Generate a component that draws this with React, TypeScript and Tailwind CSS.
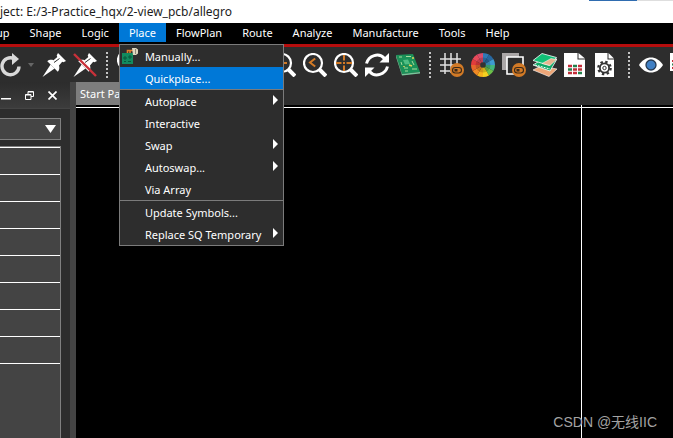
import { useState } from "react";
import type { ReactNode } from "react";

type MenuEntry = {
  label: string;
  submenu?: boolean;
  separated?: boolean;
  icon?: ReactNode;
};

type ToolProps = {
  label: string;
  children: ReactNode;
};

const MENUS = [
  "up",
  "Shape",
  "Logic",
  "Place",
  "FlowPlan",
  "Route",
  "Analyze",
  "Manufacture",
  "Tools",
  "Help",
];

const LIST_ROWS = [1, 2, 3, 4, 5, 6, 7, 8];

const WHEEL_COLORS = [
  "#2f79b5",
  "#2767a0",
  "#3f9bd0",
  "#43b77c",
  "#6cc04a",
  "#f5d21f",
  "#f7b21c",
  "#f08a24",
  "#e8662c",
  "#e23c3c",
  "#e84a5a",
  "#d94b6b",
];

const Tool = ({ label, children }: ToolProps) => (
  <button type="button" aria-label={label} className="h-6 w-6 shrink-0">
    <svg viewBox="0 0 24 24" className="block h-6 w-6" fill="none">
      {children}
    </svg>
  </button>
);

const Divider = () => (
  <span className="mx-0.5 h-[26px] w-0 shrink-0 border-l-2 border-dotted border-[#c4c4c4]" />
);

const Lens = ({ children }: { children?: ReactNode }) => (
  <>
    <circle cx="10" cy="10" r="9" stroke="#fff" strokeWidth="2.2" />
    <path d="M16 16l7 7" stroke="#fff" strokeWidth="4" />
    {children}
  </>
);

const Pin = () => (
  <g fill="#fff">
    <path d="M16 0l8 8-2.6 1.3-1.2-.5-3.2 3.7c.8 2.4.2 4.800-1.200 6.200L5.300 8.200c1.500-1.400 4-1.800 6.200-1l3.800-3.200-.6-1.500z" />
    <path d="M8.600 11.500l4 4L.5 24z" />
    <path d="M17.500 5.500l-5.500 4" stroke="#2d2d2d" />
  </g>
);

const Toggle = () => (
  <>
    <circle cx="17" cy="17" r="7" fill="#d27a26" />
    <rect x="12.5" y="14.5" width="9" height="5.500" rx="2.700" stroke="#3b2a1a" strokeWidth="1.100" />
    <path d="M14.500 16h3v2.500h-3z" fill="#3b2a1a" />
  </>
);

const wedge = (index: number, outer: number) => {
  const from = (index * Math.PI) / 6 - Math.PI / 2;
  const to = from + Math.PI / 6;
  const x = (angle: number) => 12 + outer * Math.cos(angle);
  const y = (angle: number) => 12 + outer * Math.sin(angle);
  return `M12 12L${x(from)} ${y(from)}A${outer} ${outer} 0 0 1 ${x(to)} ${y(to)}Z`;
};

const ComponentIcon = () => (
  <svg viewBox="0 0 16 16" className="h-4 w-4" fill="none">
    <path d="M0 5h11v11H0z" fill="#128a5e" />
    <path d="M2 9h2v2H2zM7 8h2v2H7z" stroke="#07563a" />
    <path d="M2 13.500h2M6 13.500h3" stroke="#07563a" />
    <path d="M5.500 5V2.500H11M8 2.500V5" stroke="#e07c2c" strokeWidth="1.600" />
    <path d="M10 0h4l2 1.500v4L14 7h-3z" fill="#ddd6be" />
    <path d="M13.500 1v5" stroke="#8d8877" />
  </svg>
);

const PLACE_MENU: MenuEntry[] = [
  { label: "Manually...", icon: <ComponentIcon /> },
  { label: "Quickplace..." },
  { label: "Autoplace", submenu: true, separated: true },
  { label: "Interactive" },
  { label: "Swap", submenu: true },
  { label: "Autoswap...", submenu: true },
  { label: "Via Array" },
  { label: "Update Symbols...", separated: true },
  { label: "Replace SQ Temporary", submenu: true },
];

const PlaceMenu = () => {
  const [active, setActive] = useState("Quickplace...");

  return (
    <div
      role="menu"
      className="absolute left-0 top-[21px] z-20 w-[165px] border border-[#7b7b7b] bg-[#2d2d2d]"
    >
      {PLACE_MENU.map((entry) => (
        <div key={entry.label} className={entry.separated ? "border-t border-[#7b7b7b]" : ""}>
          <button
            type="button"
            role="menuitem"
            onMouseEnter={() => setActive(entry.label)}
            className={`flex h-[22px] w-full items-center whitespace-nowrap pr-[5px] text-left ${
              active === entry.label ? "bg-[#0078d7]" : ""
            }`}
          >
            <span className="flex w-[25px] shrink-0 pl-0.5">{entry.icon}</span>
            <span className="flex-1 pt-0.5">{entry.label}</span>
            {entry.submenu ? (
              <svg viewBox="0 0 5 10" className="mb-0.5 h-2.5 w-[5px]">
                <path d="M0 0l5 5-5 5z" fill="#fff" />
              </svg>
            ) : null}
          </button>
        </div>
      ))}
    </div>
  );
};

const MenuBar = () => {
  const [open, setOpen] = useState("Place");

  return (
    <nav className="flex h-[21px] bg-black">
      <div className="-ml-3.5 flex">
        {MENUS.map((menu) => (
          <div key={menu} className="relative">
            <button
              type="button"
              aria-expanded={open === menu}
              onClick={() => setOpen(open === menu ? "" : menu)}
              className={`flex h-[19px] items-center px-2.5 pt-0.5 ${
                open === menu ? "bg-[#0078d7]" : ""
              }`}
            >
              {menu}
            </button>
            {menu === "Place" && open === menu ? <PlaceMenu /> : null}
          </div>
        ))}
      </div>
    </nav>
  );
};

const Toolbar = () => (
  <div className="flex h-[35px] items-center gap-[7px] overflow-hidden bg-[#2d2d2d]">
    <div className="flex w-[35px] shrink-0 items-center gap-1">
      <Tool label="Redo">
        <path d="M14 5.500A8.500 8.500 0 1 0 19 13.500" stroke="#d9d9d9" strokeWidth="3.400" />
        <path d="M12 0l7 6-7 6z" fill="#d9d9d9" />
      </Tool>
      <svg viewBox="0 0 6 4" className="h-1 w-1.5">
        <path d="M0 0h6L3 4z" fill="#666" />
      </svg>
    </div>
    <Tool label="Fix">
      <Pin />
    </Tool>
    <Tool label="Unfix">
      <Pin />
      <path d="M1 1l22 22" stroke="#c9313a" strokeWidth="2.400" />
    </Tool>
    <Divider />
    <div className="w-[148px] shrink-0">
      <Tool label="Zoom points">
        <Lens />
      </Tool>
    </div>
    <Tool label="Zoom out">
      <Lens>
        <path d="M5 10h10" stroke="#d27a26" strokeWidth="2" />
      </Lens>
    </Tool>
    <Tool label="Zoom previous">
      <Lens>
        <path d="M12.200 5.500L7 9.500l5.200 4" stroke="#d27a26" strokeWidth="2" />
      </Lens>
    </Tool>
    <Tool label="Zoom selection">
      <Lens>
        <path d="M2 10h5.500M12.500 10H18M10 2v5.500M10 12.500v5.500M9 10h2" stroke="#d27a26" strokeWidth="2" />
      </Lens>
    </Tool>
    <Tool label="Redraw">
      <path d="M1.500 10.500C3.500 2.500 14 -1 19.500 5.500" stroke="#fff" strokeWidth="3" />
      <path d="M24 0v9.500h-9.500z" fill="#fff" />
      <path d="M22.500 13.500C20.500 21.500 10 25 4.500 18.500" stroke="#fff" strokeWidth="3" />
      <path d="M0 24v-9.500h9.500z" fill="#fff" />
    </Tool>
    <Tool label="3D view">
      <path d="M0 2l17-1 7 18-18 2z" fill="#1b9158" />
      <path d="M0 2l6 19v1.500L0 4zM6 21l18-2v1.500L6 22.500z" fill="#79c79b" />
      <path d="M7 7l5-.5 2 4.500-5 .5z" fill="#4fbd83" />
      <path d="M3 4h3M10 3.500h5M5 9l1 3M16 8l2 4M8 15h4M16 16h5M9 18h3" stroke="#a8dc9d" />
      <path d="M13 12l3 1M17 4v2M8 13v1" stroke="#e8d35a" strokeWidth="1.500" />
    </Tool>
    <Divider />
    <Tool label="Grid toggle">
      <path d="M5 0v21M11 0v20M17 0v12M0 6h21M0 12h14M0 18h11" stroke="#e2e2e2" strokeWidth="1.500" />
      <Toggle />
    </Tool>
    <Tool label="Color">
      {WHEEL_COLORS.map((color, index) => (
        <path key={color} d={wedge(index, 12)} fill={color} />
      ))}
      <circle cx="12" cy="12" r="7.500" fill="#000" opacity=".16" />
      <circle cx="12" cy="12" r="2.800" fill="#333" />
    </Tool>
    <Tool label="Shadow toggle">
      <path d="M0 0h17v17H0z" fill="#aaa6a6" />
      <path d="M5 4h16v17H5z" fill="#2d2d2d" stroke="#fff" strokeWidth="1.600" />
      <Toggle />
    </Tool>
    <Tool label="Cross section">
      <path d="M0 17l8-4 16 3-8 7.500z" fill="#eda678" stroke="#fff" strokeWidth=".6" />
      <path d="M0 12l8-5 16-1-7 12z" fill="#10a866" stroke="#fff" strokeWidth=".8" />
      <path d="M2 12l15 4" stroke="#fff" strokeDasharray="2 1" />
      <path d="M0 7.500L9 .5l14.500 4-7 8z" fill="#12c077" stroke="#fff" strokeWidth=".8" />
      <path d="M9 10.500l9-5 5.500 1-6.500 6z" fill="#e7b48d" stroke="#fff" strokeWidth=".5" />
    </Tool>
    <Tool label="Constraint manager">
      <path d="M0 0h13.500v6.500H21V24H0z" fill="#fff" />
      <path d="M14.500 0L21 5.500h-6.500z" fill="#fff" />
      <path d="M4 13h4M14 13h4M9 20h4" stroke="#c52e3a" strokeWidth="2.400" />
      <path d="M9 13h4M4 16.500h4M14 20h4" stroke="#23804c" strokeWidth="2.400" />
      <path d="M9 16.500h4M14 16.500h4M4 20h4" stroke="#b9333a" strokeWidth="2.400" />
    </Tool>
    <Tool label="Design parameters">
      <path d="M0 0h12.500v6.500H19V24H0z" fill="#fff" />
      <path d="M13.500 0L19 5.500h-5.500z" fill="#fff" />
      <circle cx="9.500" cy="15" r="6.200" stroke="#333" strokeWidth="2.200" strokeDasharray="2.400 2.470" />
      <circle cx="9.500" cy="15" r="4.600" stroke="#333" strokeWidth="1.800" />
      <circle cx="9.500" cy="15" r="1.700" stroke="#333" />
    </Tool>
    <Divider />
    <Tool label="Visibility">
      <path d="M0 12C6 2 18 2 24 12 18 22 6 22 0 12z" fill="#fff" />
      <circle cx="12" cy="12" r="5" fill="#3f7fc4" stroke="#263a52" strokeWidth="1.300" />
    </Tool>
    <Tool label="Reports">
      <path d="M0 0h24v18H0z" fill="#fff" />
      <path d="M2 8h4M2 15h4" stroke="#c52e3a" strokeWidth="2" />
      <path d="M2 11.500h4" stroke="#23804c" strokeWidth="2" />
    </Tool>
  </div>
);

const SidePanel = () => (
  <aside className="flex w-[76px] shrink-0 flex-col border-r-[6px] border-[#444] bg-[#2d2d2d]">
    <div className="flex h-[27px] items-center gap-3.5 border-b border-[#444] bg-linear-to-b from-[#2c2c2c] to-[#3c3c3c]">
      <button type="button" aria-label="Minimize" className="h-[9px] w-[11px]">
        <svg viewBox="0 0 11 9" className="block h-[9px] w-[11px]">
          <path d="M1 7h10v1.500H1z" fill="#fff" />
        </svg>
      </button>
      <button type="button" aria-label="Restore" className="h-[9px] w-[9px]">
        <svg viewBox="0 0 9 9" className="block h-[9px] w-[9px]" fill="none" stroke="#fff">
          <path d="M3 3V.5h5.500v5H6M3 1h5M.5 3.500H6v5H.5zM.5 4H6" />
        </svg>
      </button>
      <button type="button" aria-label="Close" className="h-[9px] w-[9px]">
        <svg viewBox="0 0 9 9" className="block h-[9px] w-[9px]" stroke="#fff" strokeWidth="1.700">
          <path d="M.5.5l8 8M8.500.5l-8 8" />
        </svg>
      </button>
    </div>
    <div className="relative mr-[9px] mt-[9px]">
      <select
        aria-label="View"
        className="block h-[22px] w-full appearance-none rounded-none border border-l-0 border-[#808080] bg-[#444]"
      />
      <svg viewBox="0 0 11 8" className="pointer-events-none absolute right-[5px] top-[7px] h-2 w-[11px]">
        <path d="M0 0h11L5.500 8z" fill="#fff" />
      </svg>
    </div>
    <ul className="mr-[9px] mt-1.5 flex-1 border-r border-t border-[#808080] bg-[#444]">
      {LIST_ROWS.map((row) => (
        <li key={row} className={`border-b border-white ${row === 1 ? "h-7 border-t" : "h-[27px]"}`} />
      ))}
    </ul>
  </aside>
);

const Workspace = () => (
  <main className="flex min-w-0 flex-1 flex-col bg-black">
    <div className="flex h-[23px] bg-[#2d2d2d]">
      <button type="button" className="bg-[#7d7d7d] px-1 pt-0.5">
        Start Page
      </button>
    </div>
    <div className="relative flex flex-1">
      <div className="flex-1 border-r border-white pt-0.5">
        <div className="h-px bg-white" />
      </div>
      <div className="w-[91px] pt-0.5">
        <div className="h-px bg-white" />
      </div>
      <p className="absolute bottom-1.5 right-4 whitespace-nowrap font-['Liberation_Sans','Noto_Sans_CJK_SC',sans-serif] text-[14px] leading-5 text-[#a3a3a3]">
        CSDN @无线IIC
      </p>
    </div>
  </main>
);

export default function App() {
  return (
    <div className="flex min-h-screen flex-col overflow-hidden bg-[#2d2d2d] font-['Noto_Sans','Noto_Sans_CJK_SC',sans-serif] text-[11px] text-white">
      <header className="flex h-[23px] justify-between bg-white">
        <h1 className="whitespace-nowrap text-[12px] leading-6 text-[#1c1c1c]">
          ject: E:/3-Practice_hqx/2-view_pcb/allegro
        </h1>
        <div className="flex h-px">
          <span className="w-12 bg-[#2f6cb0]" />
          <span className="w-9 bg-[#dedede]" />
        </div>
      </header>
      <MenuBar />
      <div className="h-[3px] bg-[#b60d0d]" />
      <Toolbar />
      <div className="flex flex-1">
        <SidePanel />
        <Workspace />
      </div>
    </div>
  );
}
